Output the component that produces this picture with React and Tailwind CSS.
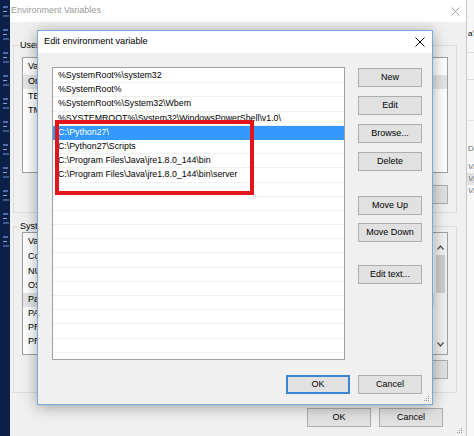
import React from 'react';

const font = { fontFamily: '"Liberation Sans", Arial, sans-serif' };

const WinButton = ({ children, className = '', primary = false }) => (
  <div
    className={`flex h-[19px] w-[64px] shrink-0 items-center justify-center bg-[#e1e1e1] text-[9px] leading-none text-black ${
      primary ? 'border-2 border-[#3a86d4]' : 'border border-[#adadad]'
    } ${className}`}
  >
    {children}
  </div>
);

const CloseX = ({ color = '#000', size = 10 }) => (
  <svg width={size} height={size} viewBox="0 0 10 10">
    <path d="M0.5 0.5 L9.5 9.5 M9.5 0.5 L0.5 9.5" stroke={color} strokeWidth="1" />
  </svg>
);

const Grip = () => (
  <svg width="6" height="6" viewBox="0 0 6 6">
    <rect x="4" y="0" width="1" height="1" fill="#9a9a9a" />
    <rect x="2" y="2" width="1" height="1" fill="#9a9a9a" />
    <rect x="4" y="2" width="1" height="1" fill="#9a9a9a" />
    <rect x="0" y="4" width="1" height="1" fill="#9a9a9a" />
    <rect x="2" y="4" width="1" height="1" fill="#9a9a9a" />
    <rect x="4" y="4" width="1" height="1" fill="#9a9a9a" />
  </svg>
);

const userVars = ['OneDrive', 'TEMP', 'TMP'];
const systemVars = ['ComSpec', 'NUMBER_OF_PROCESSORS', 'OS', 'Path', 'PATHEXT', 'PROCESSOR_ARCHITECTURE', 'PROCESSOR_IDENTIFIER'];

const pathEntries = [
  '%SystemRoot%\\system32',
  '%SystemRoot%',
  '%SystemRoot%\\System32\\Wbem',
  '%SYSTEMROOT%\\System32\\WindowsPowerShell\\v1.0\\',
  'C:\\Python27\\',
  'C:\\Python27\\Scripts',
  'C:\\Program Files\\Java\\jre1.8.0_144\\bin',
  'C:\\Program Files\\Java\\jre1.8.0_144\\bin\\server',
];

// desktop icons peeking out on the left
const Desktop = () => (
  <div className="flex w-[10px] shrink-0 flex-col gap-[12px] bg-[#0b2149] pt-[6px]">
    {[0, 1, 2, 3, 4, 5, 6, 7, 8, 9, 10].map((i) => (
      <div key={i} className="flex flex-col gap-[3px] pl-[3px]">
        <div className="h-[2px] w-[5px] bg-[#4d6ea6]" />
        <div className="h-[1px] w-[4px] bg-[#8aa3cf]" />
        <div className="h-[2px] w-[6px] bg-[#3a5a90]" />
      </div>
    ))}
  </div>
);

const VarList = ({ rows, selected, height, scrollbar }) => (
  <div className={`relative flex shrink-0 flex-col overflow-hidden border border-[#a0a0a0] bg-white ${height}`}>
    <div className="flex h-[17px] items-center pl-[5px] text-[9px] text-black">Variable</div>
    {rows.map((r) => (
      <div
        key={r}
        className={`flex h-[14.2px] items-center pl-[5px] text-[9px] text-black ${r === selected ? 'bg-[#e5e5e5]' : ''}`}
      >
        {r}
      </div>
    ))}
    {scrollbar && (
      <div className="absolute right-0 top-0 flex h-full w-[13px] flex-col items-center bg-[#f0f0f0]">
        <div className="flex h-[20px] items-end pb-[3px]">
          <svg width="7" height="5" viewBox="0 0 7 5">
            <path d="M0.5 4.5 L3.5 1 L6.5 4.5" stroke="#505050" strokeWidth="1.2" fill="none" />
          </svg>
        </div>
        <div className="mt-[2px] h-[38px] w-[9px] bg-[#cdcdcd]" />
        <div className="flex-1" />
        <div className="flex h-[14px] items-start pt-[2px]">
          <svg width="7" height="5" viewBox="0 0 7 5">
            <path d="M0.5 0.5 L3.5 4 L6.5 0.5" stroke="#505050" strokeWidth="1.2" fill="none" />
          </svg>
        </div>
      </div>
    )}
  </div>
);

const OuterWindow = () => (
  <div className="flex w-[456px] shrink-0 flex-col bg-[#f0f0f0]">
    <div className="flex h-[22px] items-center justify-between bg-white pl-[1px] pr-[6px]">
      <span className="text-[9px] text-[#9a9a9a]">Environment Variables</span>
      <CloseX color="#a0a0a0" size={9} />
    </div>
    <div className="flex flex-col pl-[3px] pr-[9px]">
      <fieldset className="mt-[17px] flex flex-col border border-[#dcdcdc] px-[8px] pb-[8px]">
        <legend className="-ml-[3px] px-[1px] text-[9px] leading-[12px] text-black">User variables for user</legend>
        <div className="mt-[6px]" />
        <VarList rows={userVars} selected="OneDrive" height="h-[116px]" />
        <div className="mt-[12px] flex justify-end gap-[8px]">
          <WinButton>New...</WinButton>
          <WinButton>Edit...</WinButton>
          <WinButton>Delete</WinButton>
        </div>
      </fieldset>
      <fieldset className="mt-[7px] flex flex-col border border-[#dcdcdc] px-[8px] pb-[13px]">
        <legend className="-ml-[3px] px-[1px] text-[9px] leading-[12px] text-black">System variables</legend>
        <VarList rows={systemVars} selected="Path" height="h-[123px]" scrollbar />
        <div className="mt-[5px] flex justify-end gap-[8px]">
          <WinButton>New...</WinButton>
          <WinButton>Edit...</WinButton>
          <WinButton>Delete</WinButton>
        </div>
      </fieldset>
    </div>
    <div className="mt-[15px] flex justify-end gap-[8px] pr-[23px]">
      <WinButton>OK</WinButton>
      <WinButton>Cancel</WinButton>
    </div>
    <div className="flex flex-1 items-end justify-end pb-[2px] pr-[3px]">
      <Grip />
    </div>
  </div>
);

const BackWindow = () => (
  <div className="flex w-[8px] shrink-0 flex-col overflow-hidden whitespace-nowrap border-l border-[#c8c8c8] bg-[#f7f7f7] text-[8px] leading-[12px] text-[#707070]">
    <div className="mt-[28px] pl-[1px] text-black">a°</div>
    <div className="mt-[12px] h-[1px] bg-[#dcdcdc]" />
    <div className="mt-[26px] h-[1px] bg-[#dcdcdc]" />
    <div className="mt-[40px] h-[1px] bg-[#e6e6e6]" />
    <div className="mt-[22px] pl-[1px]">Da</div>
    <div className="mt-[6px] pl-[1px] italic">V/</div>
    <div className="bg-[#e2e2e2] pl-[1px] italic">V/</div>
    <div className="pl-[1px] italic">V/</div>
  </div>
);

const EditDialog = () => (
  <div className="absolute left-[37px] top-[30px] flex h-[375px] w-[396px] flex-col border border-[#79a9dc] bg-[#f0f0f0] shadow-[0_2px_14px_rgba(0,0,0,0.35)]">
    <div className="flex h-[22px] shrink-0 items-center justify-between bg-white pl-[6px] pr-[7px]">
      <span className="text-[9.2px] text-black">Edit environment variable</span>
      <CloseX />
    </div>
    <div className="flex gap-[13px] pl-[14px] pt-[14px]">
      <div className="relative flex h-[293px] w-[293px] shrink-0 flex-col overflow-hidden border border-[#a0a0a0] bg-white pt-[1px]">
        {Array.from({ length: 21 }).map((_, i) => {
          const text = pathEntries[i];
          const selected = i === 4;
          return (
            <div
              key={i}
              className={`flex h-[14.2px] shrink-0 items-center whitespace-nowrap border-b pl-[5px] text-[8.8px] ${
                selected ? 'border-[#3399ff] bg-[#3399ff] text-white' : 'border-[#f1f1f1] text-black'
              }`}
            >
              {text || ''}
            </div>
          );
        })}
        <div className="absolute left-[2px] top-[52px] h-[75px] w-[199px] border-[4px] border-[#e3141c]" />
      </div>
      <div className="flex flex-col pt-[1px]">
        <WinButton>New</WinButton>
        <WinButton className="mt-[9px]">Edit</WinButton>
        <WinButton className="mt-[9px]">Browse...</WinButton>
        <WinButton className="mt-[9px]">Delete</WinButton>
        <WinButton className="mt-[25px]">Move Up</WinButton>
        <WinButton className="mt-[8px]">Move Down</WinButton>
        <WinButton className="mt-[23px]">Edit text...</WinButton>
      </div>
    </div>
    <div className="mt-[15px] flex justify-end gap-[8px] pr-[10px]">
      <WinButton primary>OK</WinButton>
      <WinButton>Cancel</WinButton>
    </div>
    <div className="flex flex-1 items-end justify-end pb-[2px] pr-[2px]">
      <Grip />
    </div>
  </div>
);

export default function App() {
  return (
    <div className="relative flex h-[436px] w-[474px] overflow-hidden" style={font}>
      <Desktop />
      <OuterWindow />
      <BackWindow />
      <EditDialog />
    </div>
  );
}
